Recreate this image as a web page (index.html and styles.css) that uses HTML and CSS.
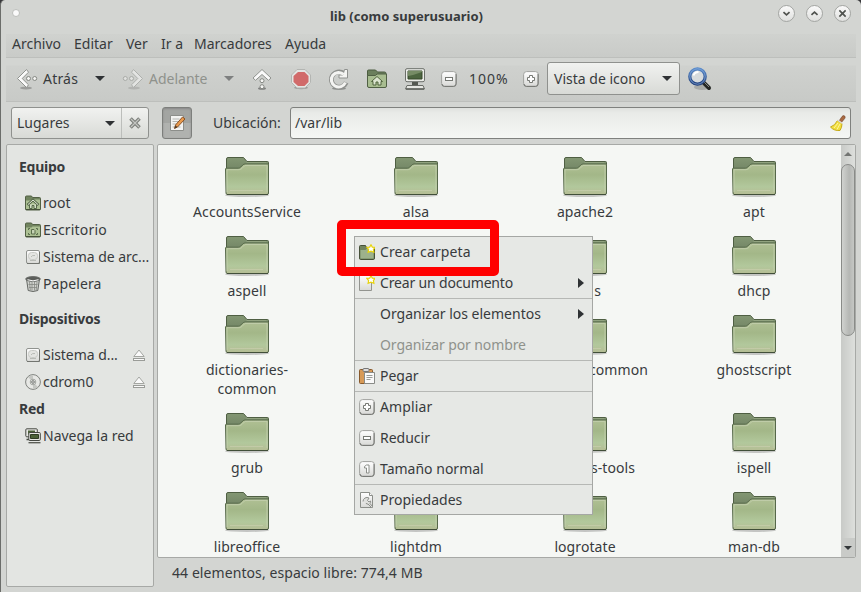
FILE: index.html
```html
<!DOCTYPE html>
<html lang="es">
<head>
<meta charset="utf-8">
<title>lib (como superusuario)</title>
<link rel="stylesheet" href="styles.css">
</head>
<body>
<svg class="defs" width="0" height="0" aria-hidden="true">
  <defs>
    <linearGradient id="gFront" x1="0" y1="0" x2="0" y2="1"><stop offset="0" stop-color="#b0c094"/><stop offset=".35" stop-color="#a3b788"/><stop offset=".75" stop-color="#b2c89c"/><stop offset="1" stop-color="#b5bd94"/></linearGradient>
    <linearGradient id="gBack" x1="0" y1="0" x2="0" y2="1"><stop offset="0" stop-color="#839773"/><stop offset=".6" stop-color="#68795c"/></linearGradient>
    <linearGradient id="gLight" x1="0" y1="0" x2="0" y2="1"><stop offset="0" stop-color="#fff"/><stop offset="1" stop-color="#d8d9d6"/></linearGradient>
    <linearGradient id="gBlue" x1="0" y1="0" x2="0" y2="1"><stop offset="0" stop-color="#5789c9"/><stop offset="1" stop-color="#203e7a"/></linearGradient>
  </defs>
  <symbol id="folder" viewBox="0 0 46 42">
    <ellipse cx="23" cy="39.3" rx="22" ry="1.7" fill="#000" opacity=".2"/>
    <path d="M2.500 13V3q0-1.500 1.500-1.500h15.500l3.500 4h20.500q1 0 1 1V37H2.500z" fill="url(#gBack)" stroke="#4f5f43"/>
    <path d="M22.500 6.500h20" stroke="#91a37f" fill="none"/>
    <path d="M1.500 13q0-.8 1-.8h12q1.300 0 2.300-1.200l2-2q1-1 2.300-1h22.400q1 0 1 1V37q0 1.500-1.500 1.500H3.500Q2 38.500 2 37z" fill="url(#gFront)" stroke="#56684a"/>
    <path d="M3 36V13.700h12q1.700 0 3-1.300l2.500-2.500q.6-.5 1.500-.5h21V36" fill="none" stroke="#c7d2b3" opacity=".75"/>
    <path d="M6 34.500h33" stroke="#d6d5bb" opacity=".45"/>
    <path d="M3 38.500h41" stroke="#414f39"/>
  </symbol>
  <symbol id="sfolder" viewBox="0 0 16 16">
    <path d="M.5 14V2Q.5 1 1.500 1h5l1 1.500h7q1 0 1 1V14q0 1-1 1h-13q-1 0-1-1z" fill="#71845f" stroke="#526044"/>
    <path d="M1 5.500h5.500l1-1h7.500V14H1z" fill="#acc093"/><path d="M1 14.500h14" stroke="#465139"/>
  </symbol>
  <symbol id="home" viewBox="0 0 16 16"><use href="#sfolder"/><path d="M2.500 10L8 5l5.500 5" fill="none" stroke="#56694a" stroke-width="2.600"/><path d="M4.500 9.500v4h2.500v-3h2v3h2.500v-4" fill="#d5dfc7" stroke="#56694a"/><path d="M3 9.600L8 5l5 4.600" fill="none" stroke="#e1e8d6"/></symbol>
  <symbol id="desk" viewBox="0 0 16 16"><use href="#sfolder"/><path d="M3.500 8V6.500H5M11 6.500h1.500V8M3.500 11v1.500H5M11 12.500h1.500V11" fill="none" stroke="#5b6e4d"/><path d="M6.500 7.500h2.500l1 1v3.500H6.500z" fill="#c5d2b4" stroke="#5b6e4d"/></symbol>
  <symbol id="disk" viewBox="0 0 16 16"><rect x="1.500" y="1.500" width="13" height="13" rx="1.500" fill="url(#gLight)" stroke="#90938f"/><path d="M2 14.500h12.500V3" fill="none" stroke="#727570"/><rect x="3.500" y="3.500" width="9" height="7" rx="3" fill="#e4e5e2" stroke="#c8cac6"/><path d="M6 8q1-2 4-1.500M5 11.500h6" fill="none" stroke="#b8bbb6"/></symbol>
  <symbol id="trash" viewBox="0 0 16 16"><path d="M1.500 3l1.700 11.500q4.800 2 9.600 0L14.500 3z" fill="#d0d2ce" stroke="#656864"/><path d="M4.500 6l.8 8M7 6v8.500M9.500 6v8.500M12 6l-.8 8M3.500 8.500h9M4 11.500h8" stroke="#858883" stroke-width=".8" fill="none"/><ellipse cx="8" cy="3" rx="7.300" ry="2.400" fill="#5b5e5a" stroke="#6a6d69"/><path d="M2.500 3.700q5.500 2.400 11 0" stroke="#fff" fill="none"/></symbol>
  <symbol id="cd" viewBox="0 0 16 16"><circle cx="8" cy="8" r="7.400" fill="#e7e8e5" stroke="#7f827e"/><path d="M8 8L3 3Q5 1.500 8 1.500zM8 8l5 5q-2 1.500-5 1.500z" fill="#c5c7c3"/><circle cx="8" cy="8" r="2.800" fill="#f4f5f3" stroke="#a1a49f"/><circle cx="8" cy="8" r="1.300" fill="#fff" stroke="#686b67"/></symbol>
  <symbol id="net" viewBox="0 0 16 16"><rect x=".8" y=".8" width="11.500" height="8" rx="1" fill="#e8e9e5" stroke="#454841"/><path d="M3 2.500h7v4H3z" fill="#4c6238"/><path d="M1.500 11.500h4" stroke="#454841" stroke-width="1.500"/><rect x="3.800" y="4.500" width="11.500" height="8" rx="1" fill="#e8e9e5" stroke="#454841"/><path d="M5.500 6.500h8v4h-8z" fill="#4c6238" stroke="#2e3d23"/><path d="M3.500 14.700h12" stroke="#555850" stroke-width="1.300"/></symbol>
  <symbol id="eject" viewBox="0 0 12 12"><path d="M6 1L.8 7.500h10.400z" fill="#fafafa" stroke="#a4a6a2"/><rect x=".5" y="9.500" width="11" height="2" fill="#fafafa" stroke="#9a9c98"/></symbol>
  <symbol id="zbox" viewBox="0 0 16 16"><rect x=".6" y=".6" width="14.800" height="14.800" rx="3" fill="url(#gLight)" stroke="#a0a29e"/><path d="M1 13q0 2.400 2.500 2.400h9q2.500 0 2.500-2.400V3" fill="none" stroke="#747672"/></symbol>
  <symbol id="zin" viewBox="0 0 16 16"><use href="#zbox"/><path d="M6.500 4.500h3v2h2v3h-2v2h-3v-2h-2v-3h2z" fill="#fff" stroke="#767974"/></symbol>
  <symbol id="zout" viewBox="0 0 16 16"><use href="#zbox"/><rect x="4.500" y="6.500" width="7" height="3" fill="#fff" stroke="#767974"/></symbol>
  <symbol id="zone" viewBox="0 0 16 16"><use href="#zbox"/><path d="M5.500 5.500l2-1.500h2.500v8H7.500V7H5.500z" fill="#fff" stroke="#8b8e89"/></symbol>
  <symbol id="star" viewBox="0 0 10 10"><path d="M5 .8l1.300 2.300 2.900.2-1.800 2.200.5 2.800L5 7.200 2.100 8.300l.5-2.800L.8 3.300l2.900-.2z" fill="#fff" stroke="#e8d40e" stroke-width="1.200"/></symbol>
  <symbol id="arrow" viewBox="0 0 22 22"><ellipse cx="10" cy="20" rx="6" ry="1.500" fill="#555" opacity=".4"/><path d="M10.500 1.500L1.500 10.500l9 9 2-2.700-6.300-6.300 6.300-6.300z" fill="#fafafa" stroke="#90938f"/><circle cx="12.500" cy="10.500" r="2" fill="#f6f6f4" stroke="#858883"/><circle cx="18.700" cy="10.500" r="2" fill="#f6f6f4" stroke="#858883"/></symbol>
</svg>

<div class="window">
  <header class="titlebar">
    <span class="dot"></span>
    <h1>lib (como superusuario)</h1>
    <div class="winbtns">
      <span><svg width="9" height="9" viewBox="0 0 8 8"><path d="M1.300 2.800L4 5.300l2.700-2.500"/></svg></span>
      <span><svg width="9" height="9" viewBox="0 0 8 8"><path d="M1.300 5.300L4 2.800l2.700 2.500"/></svg></span>
      <span><svg width="9" height="9" viewBox="0 0 8 8"><path d="M1.200 1.200l5.600 5.600M6.800 1.200L1.200 6.800"/></svg></span>
    </div>
  </header>
  <nav class="menubar"><span class="m1">Archivo</span><span class="m2">Editar</span><span class="m3">Ver</span><span class="m4">Ir a</span><span class="m5">Marcadores</span><span class="m6">Ayuda</span></nav>
  <div class="toolbar">
    <svg class="t-back" width="22" height="22"><use href="#arrow"/></svg>
    <span class="t-backl">Atrás</span>
    <i class="caret t-c1"></i>
    <svg class="t-fwd" width="22" height="22"><use href="#arrow"/></svg>
    <span class="t-fwdl">Adelante</span>
    <i class="caret t-c2"></i>
    <svg class="t-up" width="22" height="22" viewBox="0 0 22 22"><ellipse cx="11" cy="20.500" rx="4" ry="1.300" fill="#333" opacity=".5"/><path d="M11 1.500l9 8.500-2.500 2.300L11 6.500l-6.500 5.800L2 10z" fill="#fafafa" stroke="#90938f"/><circle cx="11" cy="12.700" r="2" fill="#f6f6f4" stroke="#858883"/><circle cx="11" cy="18.700" r="2" fill="#f6f6f4" stroke="#858883"/></svg>
    <svg class="t-stop" width="22" height="22" viewBox="0 0 22 22"><ellipse cx="11" cy="19.800" rx="7" ry="1.400" fill="#333" opacity=".3"/><path d="M7 1.500h8L20.500 7v7.500L15 20H7l-5.500-5.500V7z" fill="#e3e4e2" stroke="#b3b5b2"/><path d="M8 4h6.500l4 4v6l-4 4H8l-4.500-4V8z" fill="#d16a6a"/></svg>
    <svg class="t-reload" width="22" height="22" viewBox="0 0 22 22"><ellipse cx="11" cy="20.500" rx="7" ry="1.300" fill="#333" opacity=".4"/><path d="M18.200 14.500a7.700 7.700 0 1 1-2.700-9.300" fill="none" stroke="#8f918e" stroke-width="4.800"/><path d="M19.500 1.500v8.500h-8.500v-3l4 0 1.500-5.500z" fill="#f4f4f2" stroke="#8f918e"/><path d="M17.400 14.500a7.300 7.300 0 1 1-1.600-8" fill="none" stroke="#f4f4f2" stroke-width="3"/></svg>
    <svg class="t-home" width="22" height="22" viewBox="0 0 22 22"><path d="M1.500 18V3q0-1 1-1h7l2 2h7q1.500 0 1.500 1.500V18z" fill="#6b7f5c" stroke="#4c5d40"/><path d="M1.500 7.500h8l1.500-1.500h9.500V18q0 1.500-1.500 1.500H3q-1.500 0-1.500-1.500z" fill="#a8bd90" stroke="#506044"/><path d="M5.500 13.500l5.500-5 5.500 5H15V17h-3v-3h-2v3H7v-3.500z" fill="#dce5d0" stroke="#51643f"/></svg>
    <svg class="t-comp" width="22" height="22" viewBox="0 0 22 22"><rect x="1.500" y=".7" width="19" height="13" rx="1.500" fill="#ecede9" stroke="#6c6f6a"/><path d="M4 3h14v8H4z" fill="#4d6540" stroke="#36482b"/><path d="M4 8q6-1 14-4V3H4z" fill="#768b65"/><path d="M8 14h6v3H8z" fill="#555952"/><path d="M3 17.500h16l1.500 3.500h-19z" fill="#e6e7e3" stroke="#686b66"/><path d="M2 21h18" stroke="#3f423d"/></svg>
    <svg class="t-zo" width="16" height="16"><use href="#zout"/></svg>
    <span class="t-pct">100%</span>
    <svg class="t-zi" width="16" height="16"><use href="#zin"/></svg>
    <div class="view">Vista de icono<i class="caret"></i></div>
    <svg class="t-find" width="26" height="26" viewBox="0 0 26 26"><ellipse cx="15" cy="21" rx="8" ry="3" fill="#222" opacity=".2"/><path d="M16 16l6 6" stroke="#252725" stroke-width="4" stroke-linecap="round"/><path d="M17 16l5 5" stroke="#858883"/><circle cx="10.500" cy="10.500" r="7.700" fill="#d7dbdd" stroke="url(#gBlue)" stroke-width="3.300"/><circle cx="10.500" cy="10.500" r="7.700" fill="none" stroke="#8eb0df" stroke-width=".7"/><path d="M6.500 9.500q1-3.500 5-3.500" fill="none" stroke="#fff" stroke-width="2"/></svg>
  </div>
  <div class="location">
    <div class="places"><span>Lugares</span><i class="caret"></i><b><svg width="12" height="12" viewBox="0 0 12 12"><path d="M1.500 1.500l9 9M10.500 1.500l-9 9" stroke="#7d807b" stroke-width="3.600"/><path d="M2 2l8 8M10 2l-8 8" stroke="#c3c5c1" stroke-width="1.200"/></svg></b></div>
    <div class="edit"><svg width="16" height="16" viewBox="0 0 16 16"><path d="M1.500.5h13v15h-13z" fill="#f3f3f1" stroke="#8c8e8a"/><path d="M3.500 4h7M3.500 6.500h6M3.500 9h4M3.500 12h8" stroke="#b4b6b2"/><path d="M5.500 13.500l1-3.500 7-8 2.500 2-7.500 8z" fill="#e99a4d" stroke="#885228"/><path d="M5.500 13.500l1-3 1.800 1.500z" fill="#443727"/></svg></div>
    <span class="ub">Ubicación:</span>
    <div class="entry"><span>/var/lib</span><svg width="16" height="16" viewBox="0 0 16 16"><path d="M9 6l3-4.500q1.300-1.500 2.700-.5 1 1.200 0 2.500L11 8z" fill="#a96a42" stroke="#704126" stroke-width=".6"/><path d="M7.500 5.500l4.500 3q0 4-2 7-6 .5-9.500-3.500 4.500-1.500 7-6.500z" fill="#f0dd3d" stroke="#c5aa16"/><path d="M8 8l-4 5M10 9l-3 5.500" stroke="#fff6a0"/><path d="M7.500 5l5 3.500" stroke="#ddd" stroke-width="1.500"/></svg></div>
  </div>
  <div class="body">
    <aside class="sidebar">
      <h2>Equipo</h2>
      <ul class="g1">
        <li><svg width="16" height="16"><use href="#home"/></svg><span>root</span></li>
        <li><svg width="16" height="16"><use href="#desk"/></svg><span class="s2">Escritorio</span></li>
        <li><svg width="16" height="16"><use href="#disk"/></svg><span class="s3">Sistema de arc...</span></li>
        <li><svg width="16" height="16"><use href="#trash"/></svg><span class="s4">Papelera</span></li>
      </ul>
      <h2 class="h-dev">Dispositivos</h2>
      <ul class="g2">
        <li><svg width="16" height="16"><use href="#disk"/></svg><span class="s3">Sistema d...</span><svg class="ej" width="12" height="12"><use href="#eject"/></svg></li>
        <li><svg width="16" height="16"><use href="#cd"/></svg><span>cdrom0</span><svg class="ej" width="12" height="12"><use href="#eject"/></svg></li>
      </ul>
      <h2 class="h-net">Red</h2>
      <ul><li><svg width="16" height="16"><use href="#net"/></svg><span>Navega la red</span></li></ul>
    </aside>
    <section class="content">
      <div class="pane">
        <div class="grid">
          <figure><svg width="46" height="42"><use href="#folder"/></svg><figcaption>AccountsService</figcaption></figure>
          <figure><svg width="46" height="42"><use href="#folder"/></svg><figcaption>alsa</figcaption></figure>
          <figure><svg width="46" height="42"><use href="#folder"/></svg><figcaption>apache2</figcaption></figure>
          <figure><svg width="46" height="42"><use href="#folder"/></svg><figcaption>apt</figcaption></figure>
          <figure><svg width="46" height="42"><use href="#folder"/></svg><figcaption>aspell</figcaption></figure>
          <figure></figure>
          <figure><svg width="46" height="42"><use href="#folder"/></svg><figcaption class="end1">s</figcaption></figure>
          <figure><svg width="46" height="42"><use href="#folder"/></svg><figcaption>dhcp</figcaption></figure>
          <figure><svg width="46" height="42"><use href="#folder"/></svg><figcaption>dictionaries-<br>common</figcaption></figure>
          <figure></figure>
          <figure><svg width="46" height="42"><use href="#folder"/></svg><figcaption class="end2">common</figcaption></figure>
          <figure><svg width="46" height="42"><use href="#folder"/></svg><figcaption>ghostscript</figcaption></figure>
          <figure><svg width="46" height="42"><use href="#folder"/></svg><figcaption>grub</figcaption></figure>
          <figure></figure>
          <figure><svg width="46" height="42"><use href="#folder"/></svg><figcaption class="end3">s-tools</figcaption></figure>
          <figure><svg width="46" height="42"><use href="#folder"/></svg><figcaption>ispell</figcaption></figure>
          <figure><svg width="46" height="42"><use href="#folder"/></svg><figcaption>libreoffice</figcaption></figure>
          <figure><svg width="46" height="42"><use href="#folder"/></svg><figcaption>lightdm</figcaption></figure>
          <figure><svg width="46" height="42"><use href="#folder"/></svg><figcaption>logrotate</figcaption></figure>
          <figure><svg width="46" height="42"><use href="#folder"/></svg><figcaption>man-db</figcaption></figure>
        </div>
        <div class="scroll"><i class="up"></i><div class="thumb"></div><div class="down"><i></i></div></div>
      </div>
      <footer><span>44 elementos, espacio libre: 774,4 MB</span></footer>
    </section>
  </div>
  <div class="menu">
    <div><svg width="16" height="16" viewBox="0 0 16 16"><path d="M.5 14V2.500q0-1 1-1h5l1 2h7q1 0 1 1V14q0 1.500-1 1.500h-13q-1 0-1-1.500z" fill="#71845f" stroke="#465139"/><path d="M1.500 6h5l1-1h7v9.500h-13z" fill="#9db18c"/><use href="#star" x="7" y="0" width="10" height="10"/></svg><span class="c1">Crear carpeta</span></div>
    <div><svg width="16" height="16" viewBox="0 0 16 16"><path d="M.5.5h12v15H.5z" fill="url(#gLight)" stroke="#92948f"/><use href="#star" x="7" y="0" width="10" height="10"/></svg><span class="c2">Crear un documento</span><i></i></div>
    <div class="sep"><svg width="16" height="16"></svg><span>Organizar los elementos</span><i></i></div>
    <div class="off"><svg width="16" height="16"></svg><span class="c4">Organizar por nombre</span></div>
    <div class="sep"><svg width="16" height="16" viewBox="0 0 16 16"><rect x=".5" y="1.500" width="13" height="14" rx="1" fill="#d79a57" stroke="#87592b"/><rect x="4" y=".5" width="6" height="3" rx="1" fill="#ddd" stroke="#777"/><path d="M5.500 4.500h10v11h-10z" fill="#fafafa" stroke="#898b87"/><path d="M7.500 7.500h6M7.500 9.500h6M7.500 11.500h4" stroke="#999b97"/></svg><span>Pegar</span></div>
    <div class="sep"><svg width="16" height="16"><use href="#zin"/></svg><span class="c6">Ampliar</span></div>
    <div><svg width="16" height="16"><use href="#zout"/></svg><span>Reducir</span></div>
    <div><svg width="16" height="16"><use href="#zone"/></svg><span>Tamaño normal</span></div>
    <div class="sep"><svg width="16" height="16" viewBox="0 0 16 16"><path d="M1.500.5h9l3 3v12h-12z" fill="url(#gLight)" stroke="#8b8e89"/><path d="M10.500.5v3h3" fill="#fff" stroke="#8b8e89"/><path d="M4 9.500a4 4 0 0 1 6-3.500l-1.500 2.500 1.500 1.500 1.500-1q.5 1.500-.5 2.500l2.500 3-1 1-3.500-3.500q-1.500.5-2-1" fill="#dfe0dd" stroke="#8d908b"/></svg><span>Propiedades</span></div>
  </div>
  <div class="highlight"></div>
</div>
</body>
</html>
```

FILE: styles.css
```css
* { box-sizing: border-box; }
body { margin: 0; background: #38383b; font: 14px/20px "Noto Sans", sans-serif; color: #383b3d; }
.defs { position: absolute; }
svg { display: block; flex: none; }
h1, h2, ul, figure { margin: 0; padding: 0; font-size: 14px; list-style: none; }
.window { position: relative; width: 861px; height: 592px; overflow: hidden; display: flex; flex-direction: column; background: #d3d5d2; border-left: 1px solid #6b6d6a; border-radius: 5px 5px 0 0; white-space: nowrap; }

.titlebar { height: 34px; flex: none; display: flex; align-items: center; padding: 0 10px 0 11px; }
.titlebar h1 { flex: 1; text-align: center; font-size: 13px; margin: -2px 0 0 15px; font-weight: 700; }
.dot { width: 8px; height: 8px; border-radius: 50%; background: #fafafa; border: 1px solid #bcbebb; margin-top: -8px; }
.winbtns { display: flex; gap: 11px; margin-top: -7px; }
.winbtns span { width: 17px; height: 17px; border-radius: 50%; background: linear-gradient(#fafafa, #dfe0de); border: 1px solid #a3a5a2; display: grid; place-items: center; }
.winbtns path { fill: none; stroke: #50534f; stroke-width: 1.5; }

.menubar { height: 24px; flex: none; margin: 0 5px; padding: 0 0 3px 6px; display: flex; align-items: center; background: linear-gradient(#d0d2cf, #c9cbc8); border-bottom: 1px solid #bdbfbc; }
.menubar span { flex: none; }
.m1 { width: 62px; } .m2 { width: 52px; } .m3 { width: 35px; } .m4 { width: 33px; } .m5 { width: 91px; }

.toolbar { height: 44px; flex: none; margin: 0 5px; padding: 0 0 2px 10px; display: flex; align-items: center; border-bottom: 1px solid #bdbfbc; background: linear-gradient(#d3d5d2 7px, #cfd1ce 8px, #c8cac7); }
.caret { width: 0; height: 0; border: 5px solid transparent; border-top-color: #2f3234; border-bottom: 0; flex: none; }
.t-backl { width: 52px; margin-left: 5px; letter-spacing: .2px; }
.t-fwd { margin-left: 17px; transform: scaleX(-1); opacity: .5; }
.t-fwdl { width: 75px; margin-left: 5px; color: #8f928c; }
.t-c2 { opacity: .5; }
.t-up { margin-left: 17px; }
.t-stop { margin-left: 17px; }
.t-reload { margin-left: 16px; }
.t-home { margin-left: 16px; }
.t-comp { margin-left: 16px; }
.t-zo { margin-left: 15px; }
.t-pct { width: 43px; margin-left: 12px; letter-spacing: 1px; }
.t-zi { margin-left: 11px; }
.view { width: 133px; height: 33px; margin-left: 8px; padding: 0 7px 0 6px; display: flex; align-items: center; justify-content: space-between; border: 1px solid #8f918e; border-radius: 3px; background: linear-gradient(#f1f2f0, #d8dad6); }
.t-find { margin-left: 7px; }

.location { height: 42px; flex: none; display: flex; align-items: center; padding: 0 10px 0 10px; }
.places { width: 138px; height: 32px; border: 1px solid #8f918e; border-radius: 3px; background: linear-gradient(#f1f2f0, #d8dad6); display: flex; align-items: center; }
.places span { padding-left: 5px; width: 93px; }
.places b { height: 30px; width: 27px; margin-left: 6px; display: grid; place-items: center; border-left: 1px solid #bcbebb; }
.edit { width: 30px; height: 32px; margin-left: 13px; display: grid; place-items: center; border: 1px solid #7d7f7c; border-radius: 3px; background: linear-gradient(#a3a5a2 50%, #b0b2af 50%); box-shadow: inset 0 1px 2px #888; }
.ub { width: 77px; margin-left: 21px; letter-spacing: -.05px; }
.entry { flex: 1; height: 32px; border: 1px solid #7f817e; border-radius: 3px; background: linear-gradient(#dfe1de, #e9ebe8 5px, #f5f7f4); display: flex; align-items: center; justify-content: space-between; padding: 0 4px; }

.body { flex: 1; display: flex; gap: 3px; padding: 0 5px; min-height: 0; }
.sidebar { width: 148px; flex: none; height: 443px; border: 1px solid #a7a9a6; border-radius: 2px; background: #e3e5e2; padding: 12px 0 0; }
.sidebar h2 { padding-left: 12px; height: 20px; letter-spacing: -.25px; }
.sidebar li { height: 27px; display: flex; align-items: center; gap: 2px; padding-left: 18px; }
.g1 { margin-top: 12px; }
.h-dev { margin-top: 12px; }
.g2 { margin-top: 12px; }
.s2 { letter-spacing: .2px; }
.s3 { letter-spacing: -.05px; }
.s4 { letter-spacing: .1px; }
.sidebar .h-net { height: 27px; line-height: 27px; }
.ej { margin-left: auto; margin-right: 8px; }

.content { width: 699px; flex: none; display: flex; flex-direction: column; }
.pane { height: 414px; border: 1px solid #a7a9a6; border-radius: 2px; background: #f5f7f4; display: flex; overflow: hidden; }
.grid { width: 683px; flex: none; padding: 11px 0 0 4px; display: grid; grid-template-columns: repeat(4, 169px); grid-template-rows: 79px 79px 98px 79px 79px; }
figure { display: flex; flex-direction: column; align-items: center; }
figcaption { margin: 4px 0 0 1px; line-height: 19px; text-align: center; letter-spacing: .08px; }
.end1 { align-self: flex-end; margin-right: 68px; }
.end2 { align-self: flex-end; margin-right: 21px; }
.end3 { align-self: flex-end; margin-right: 34px; }
.scroll { width: 14px; display: flex; flex-direction: column; align-items: center; background: linear-gradient(90deg, #c8cac7, #dddfdc); }
.scroll .up { margin-top: 7px; border: 4px solid transparent; border-bottom-color: #737572; border-top: 0; }
.thumb { width: 14px; height: 172px; margin-top: 8px; border: 1px solid #898b88; border-radius: 7px; background: linear-gradient(90deg, #d0d2cf, #b5b7b4 60%, #c5c7c4); }
.down { margin-top: auto; width: 14px; height: 19px; background: #c9cbc8; display: grid; place-items: center; }
.down i { border: 4px solid transparent; border-top-color: #34383a; border-bottom: 0; }
footer { height: 29px; padding-left: 15px; line-height: 29px; letter-spacing: .08px; }

.menu { position: absolute; left: 353px; top: 236px; width: 239px; height: 279px; background: #e6e8e5; outline: 1px solid #a5a7a4; outline-offset: -1px; }
.menu div { height: 31px; display: flex; align-items: center; gap: 5px; padding: 1px 9px 0 5px; }
.menu .sep { box-shadow: inset 0 1px #b6b8b5; }
.menu .off { color: #8f928c; }
.menu i { margin-left: auto; border: 5px solid transparent; border-left: 6px solid #2f3234; border-right: 0; }
.c1 { letter-spacing: .1px; }
.c2 { letter-spacing: -.17px; }
.c4 { letter-spacing: -.1px; }
.c6 { letter-spacing: .15px; }
.highlight { position: absolute; left: 336px; top: 220px; width: 162px; height: 56px; border: 9px solid #f00; border-radius: 5px; }
```
